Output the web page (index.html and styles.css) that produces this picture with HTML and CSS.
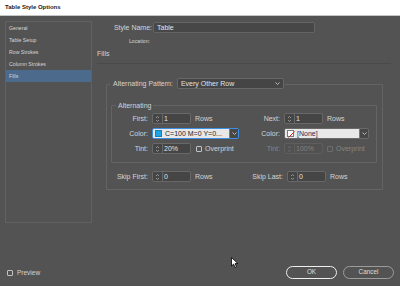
FILE: index.html
```html
<!DOCTYPE html>
<html>
<head>
<meta charset="utf-8">
<link rel="stylesheet" href="styles.css">
</head>
<body>
<div class="titlebar">Table Style Options</div>
<div class="main">
  <ul class="sidebar">
    <li>General</li>
    <li>Table Setup</li>
    <li>Row Strokes</li>
    <li>Column Strokes</li>
    <li class="active">Fills</li>
  </ul>
  <div class="content">
    <div class="name-row"><span class="lbl">Style Name:</span><div class="textfield">Table</div></div>
    <div class="loc-row"><span class="lbl-small">Location:</span></div>
    <div class="section-title">Fills</div>
    <div class="rule"></div>
    <div class="group outer">
      <div class="legend legend-outer">
        <span>Alternating Pattern:</span>
        <div class="select"><span>Every Other Row</span><svg class="chev" width="5" height="3" viewBox="0 0 5 3"><path d="M0.5 0.5 L2.5 2.5 L4.5 0.5" fill="none" stroke="#c8c8c8" stroke-width="0.9"/></svg></div>
      </div>
      <div class="group inner">
        <div class="legend legend-inner"><span>Alternating</span></div>
        <div class="cols">
          <div class="col left">
            <div class="frow"><span class="flbl">First:</span>
              <div class="spin"><div class="arrows"><svg width="5" height="8" viewBox="0 0 5 8"><path d="M1 3 L2.5 1.5 L4 3 M1 5 L2.5 6.5 L4 5" fill="none" stroke="#a8a8a8" stroke-width="0.8"/></svg></div><div class="val">1</div></div>
              <span>Rows</span></div>
            <div class="frow"><span class="flbl">Color:</span>
              <div class="cselect focus"><div class="field"><span class="sw cyan"></span><span>C=100 M=0 Y=0...</span></div><div class="dbtn"><svg width="5" height="3" viewBox="0 0 5 3"><path d="M0.5 0.5 L2.5 2.5 L4.5 0.5" fill="none" stroke="#c8c8c8" stroke-width="0.9"/></svg></div></div>
            </div>
            <div class="frow"><span class="flbl">Tint:</span>
              <div class="spin"><div class="arrows"><svg width="5" height="8" viewBox="0 0 5 8"><path d="M1 3 L2.5 1.5 L4 3 M1 5 L2.5 6.5 L4 5" fill="none" stroke="#a8a8a8" stroke-width="0.8"/></svg></div><div class="val">20%</div></div>
              <span class="cbwrap l"><span class="cb"></span><span>Overprint</span></span></div>
          </div>
          <div class="col right">
            <div class="frow"><span class="flbl">Next:</span>
              <div class="spin"><div class="arrows"><svg width="5" height="8" viewBox="0 0 5 8"><path d="M1 3 L2.5 1.5 L4 3 M1 5 L2.5 6.5 L4 5" fill="none" stroke="#a8a8a8" stroke-width="0.8"/></svg></div><div class="val">1</div></div>
              <span>Rows</span></div>
            <div class="frow"><span class="flbl">Color:</span>
              <div class="cselect plain"><div class="field"><span class="sw none"><svg width="7" height="7" viewBox="0 0 7 7"><path d="M0.5 6.5 L6.5 0.5" stroke="#e02020" stroke-width="1"/></svg></span><span class="none-txt">[None]</span></div><div class="dbtn"><svg width="5" height="3" viewBox="0 0 5 3"><path d="M0.5 0.5 L2.5 2.5 L4.5 0.5" fill="none" stroke="#c8c8c8" stroke-width="0.9"/></svg></div></div>
            </div>
            <div class="frow disabled"><span class="flbl">Tint:</span>
              <div class="spin dis"><div class="arrows"><svg width="5" height="8" viewBox="0 0 5 8"><path d="M1 3 L2.5 1.5 L4 3 M1 5 L2.5 6.5 L4 5" fill="none" stroke="#6e6e6e" stroke-width="0.8"/></svg></div><div class="val">100%</div></div>
              <span class="cbwrap"><span class="cb"></span><span>Overprint</span></span></div>
          </div>
        </div>
      </div>
      <div class="skip">
        <div class="half first"><span class="slbl">Skip First:</span>
          <div class="spin"><div class="arrows"><svg width="5" height="8" viewBox="0 0 5 8"><path d="M1 3 L2.5 1.5 L4 3 M1 5 L2.5 6.5 L4 5" fill="none" stroke="#a8a8a8" stroke-width="0.8"/></svg></div><div class="val">0</div></div>
          <span>Rows</span></div>
        <div class="half"><span class="slbl2">Skip Last:</span>
          <div class="spin"><div class="arrows"><svg width="5" height="8" viewBox="0 0 5 8"><path d="M1 3 L2.5 1.5 L4 3 M1 5 L2.5 6.5 L4 5" fill="none" stroke="#a8a8a8" stroke-width="0.8"/></svg></div><div class="val">0</div></div>
          <span>Rows</span></div>
      </div>
    </div>
  </div>
</div>
<div class="footer">
  <div class="preview"><span class="cb"></span><span>Preview</span></div>
  <div class="buttons">
    <div class="btn ok">OK</div>
    <div class="btn cancel">Cancel</div>
  </div>
</div>
<svg class="cursor" width="8" height="12" viewBox="0 0 8 12"><path d="M0.5 0.5 L0.5 9 L2.6 7.1 L4.1 10.5 L5.5 9.9 L4.1 6.6 L6.9 6.6 Z" fill="#ffffff" stroke="#000000" stroke-width="0.8" stroke-linejoin="round"/></svg>
</body>
</html>
```
FILE: styles.css
```css
* { box-sizing: border-box; margin: 0; padding: 0; }
html, body { width: 400px; height: 286px; overflow: hidden; }
body {
  background: #535353;
  font-family: "Liberation Sans", Arial, sans-serif;
  color: #d4d4d4;
  position: relative;
}
.titlebar {
  height: 16px;
  background: #ffffff;
  border-bottom: 1px solid #c6c6c6;
  color: #1b1b1b;
  font-size: 6px;
  font-weight: bold;
  line-height: 15px;
  padding-left: 5px;
}
.main { display: flex; padding: 5px 0 0 5px; height: 207px; }
.sidebar {
  list-style: none;
  width: 87px;
  height: 202px;
  border: 1px solid #616161;
  font-size: 5.2px;
  color: #d6d6d6;
  flex-shrink: 0;
}
.sidebar li { height: 12px; line-height: 12px; padding-left: 3px; }
.sidebar li.active { background: #4b6a8c; }
.content { flex: 1; padding: 0 9px 0 5px; display: flex; flex-direction: column; }
.name-row { display: flex; align-items: center; gap: 1px; margin-top: 1px; height: 11px; }
.lbl { width: 55px; text-align: right; font-size: 7px; }
.textfield {
  width: 162px; height: 11px;
  background: #474747;
  border: 1px solid #646464;
  border-radius: 2px;
  font-size: 7px; line-height: 9px;
  padding-left: 3px;
  color: #e2e2e2;
}
.loc-row { height: 10px; margin-top: 3px; display: flex; align-items: center; }
.lbl-small { width: 53px; text-align: right; font-size: 5.2px; }
.section-title { margin-top: 3px; height: 10px; line-height: 10px; font-size: 7px; }
.rule { margin-top: 4px; height: 1px; background: #4a4a4a; }
.group { border: 1px solid #646464; border-radius: 1px; display: flex; flex-direction: column; }
.outer { margin: 20px 0 0 9px; width: 277px; padding-bottom: 7px; }
.legend { display: flex; align-items: center; align-self: flex-start; background: #535353; font-size: 7px; }
.legend-outer { margin: -7px 0 0 3px; padding: 0 1px 0 3px; gap: 4px; height: 11px; }
.select {
  width: 107px; height: 11px;
  background: #454545;
  border: 1px solid #686868;
  border-radius: 2px;
  display: flex; align-items: center; justify-content: space-between;
  padding: 0 3px 0 3px;
  color: #e2e2e2;
}
.inner { margin: 16px 5px 0 4px; padding-bottom: 8px; }
.legend-inner { margin: -6px 0 0 4px; padding: 0 2px; height: 10px; }
.cols { display: flex; margin-top: 3px; }
.col { display: flex; flex-direction: column; gap: 4px; }
.col.left { width: 132px; }
.frow { display: flex; align-items: center; height: 11px; gap: 4px; font-size: 7px; }
.flbl { width: 36px; text-align: right; }
.spin {
  width: 39px; height: 11px;
  display: flex;
  background: #454545;
  border: 1px solid #686868;
  border-radius: 2px;
}
.spin .arrows {
  width: 10px;
  border-right: 1px solid #686868;
  display: flex; align-items: center; justify-content: center;
}
.spin .val { padding-left: 1px; line-height: 9px; color: #e2e2e2; }
.cselect { width: 87px; height: 11px; display: flex; border-radius: 2px; overflow: hidden; }
.cselect.focus { border: 1px solid #3d8fe2; }
.cselect.plain { width: 85px; border: 1px solid #6a6a6a; }
.cselect .field {
  flex: 1;
  background: #e8e8e8;
  display: flex; align-items: center; gap: 3px;
  padding-left: 2px;
  color: #1e1e1e;
}
.cselect .dbtn {
  width: 9px;
  background: #474747;
  border-left: 1px solid #7a7a7a;
  display: flex; align-items: center; justify-content: center;
}
.sw { width: 7px; height: 7px; display: block; flex-shrink: 0; }
.sw.cyan { background: #1ea3e3; border: 1px solid #1681b8; }
.sw.none { background: #ffffff; border: 0.5px solid #7a7a7a; }
.sw.none svg { display: block; }
.none-txt { color: #2b2b55; }
.cbwrap { display: flex; align-items: center; gap: 3px; }
.cbwrap.l { margin-left: 1px; }
.cb { width: 6px; height: 6px; border: 1px solid #c2c2c2; border-radius: 1px; display: block; }
.disabled { color: #858585; }
.disabled .cb { border-color: #6c6c6c; }
.spin.dis { background: #515151; border-color: #5e5e5e; }
.spin.dis .arrows { border-right-color: #5e5e5e; }
.spin.dis .val { color: #848484; }
.skip { display: flex; align-items: center; height: 11px; margin-top: 8px; font-size: 7px; }
.half { display: flex; align-items: center; gap: 4px; }
.half.first { width: 136px; }
.slbl { width: 41px; text-align: right; }
.slbl2 { width: 40px; text-align: right; }
.footer {
  display: flex; align-items: center; justify-content: space-between;
  margin-top: 43px; height: 13px;
  padding: 0 6px 0 7px;
}
.preview { display: flex; align-items: center; gap: 4px; font-size: 6.5px; }
.buttons { display: flex; gap: 6px; }
.btn {
  width: 51px; height: 13px;
  border-radius: 7px;
  font-size: 6.4px;
  text-align: center;
  line-height: 10px;
  color: #dedede;
}
.btn.ok { border: 1.5px solid #efefef; }
.btn.cancel { border: 1.5px solid #9c9c9c; }
.cursor { position: absolute; left: 231px; top: 257px; }
```
